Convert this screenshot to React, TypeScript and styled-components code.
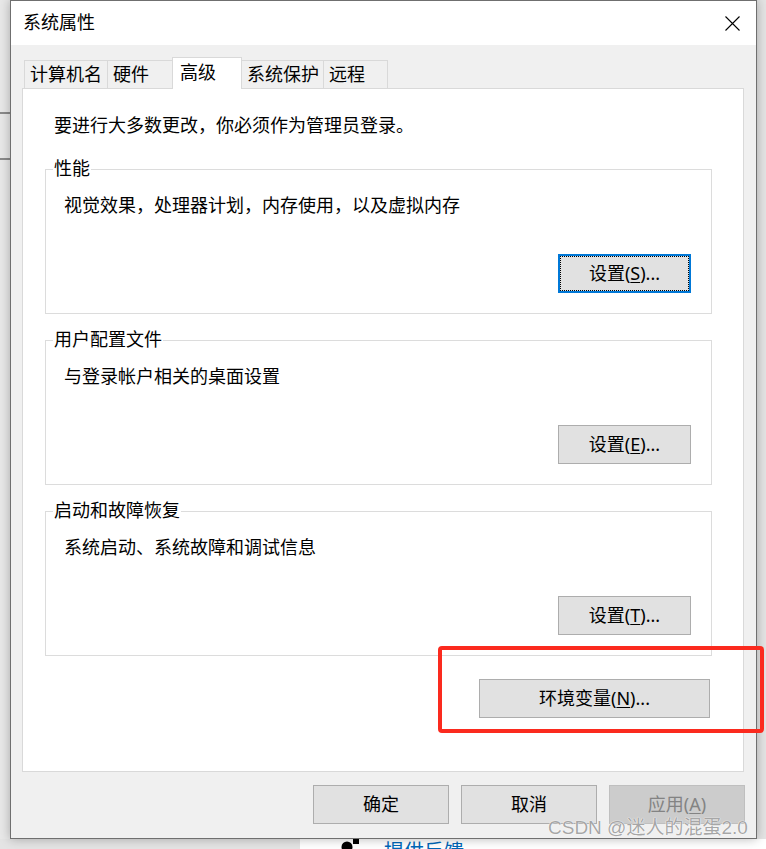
import React from "react";
import styled, { createGlobalStyle } from "styled-components";

const GlobalStyle = createGlobalStyle`
  html, body { margin: 0; padding: 0; background: #e6e6e6; }
  body {
    width: 766px; height: 849px; overflow: hidden;
    font-family: "Noto Sans", "Noto Sans CJK SC", sans-serif;
  }
  * { box-sizing: border-box; }
`;

const UI_FONT = `"Noto Sans", "Noto Sans CJK SC", sans-serif`;

const Desktop = styled.div`
  position: relative;
  width: 766px;
  height: 849px;
  display: grid;
  grid-template-columns: 10px 747px 9px;
  grid-template-rows: 839px 10px;
  background: #e4e4e4;
  overflow: hidden;
`;

const LeftStrip = styled.div`
  grid-column: 1;
  grid-row: 1;
  background: #e8e8e8;
  display: flex;
  flex-direction: column;
`;

const Rule = styled.div<{ $top: number }>`
  height: 2px;
  margin-top: ${(p) => p.$top}px;
  background: #8a8a8a;
`;

const BottomStrip = styled.div`
  grid-column: 1 / -1;
  grid-row: 2;
  display: grid;
  grid-template-columns: 300px 1fr;
  overflow: hidden;
`;

const Sidebar = styled.div`
  background: #e4e4e4;
`;

const MainArea = styled.div`
  background: #ffffff;
  display: flex;
  align-items: flex-start;
  gap: 24px;
  padding: 0 0 0 41px;
`;

const FeedbackLink = styled.span`
  font-family: "Noto Sans CJK SC", sans-serif;
  font-size: 20px;
  line-height: 20px;
  margin-top: 2px;
  color: #0067b8;
`;

const Window = styled.div`
  grid-column: 2;
  grid-row: 1;
  position: relative;
  z-index: 1;
  border: 1px solid #6f6f6f;
  background: #f0f0f0;
  display: flex;
  flex-direction: column;
  box-shadow: 0 0 10px rgba(0, 0, 0, 0.28);
`;

const TitleBar = styled.div`
  height: 44px;
  flex: none;
  background: #ffffff;
  display: flex;
  align-items: center;
  justify-content: space-between;
  padding: 0 16px 0 12px;
`;

const Title = styled.span`
  font-family: ${UI_FONT};
  font-size: 18px;
  line-height: 24px;
  margin-bottom: 3px;
  color: #000;
`;

const Body = styled.div`
  flex: 1;
  display: flex;
  flex-direction: column;
  padding: 12px 12px 14px 11px;
`;

const TabStrip = styled.div`
  height: 31px;
  flex: none;
  display: flex;
  align-items: flex-end;
  padding-left: 2px;
`;

const Tab = styled.div<{ $w: number; $selected?: boolean }>`
  width: ${(p) => p.$w}px;
  height: ${(p) => (p.$selected ? 32 : 28)}px;
  margin-bottom: ${(p) => (p.$selected ? -1 : 0)}px;
  position: relative;
  z-index: ${(p) => (p.$selected ? 2 : 1)};
  background: ${(p) => (p.$selected ? "#ffffff" : "#f0f0f0")};
  border: 1px solid #d9d9d9;
  border-bottom: none;
  display: flex;
  align-items: center;
  padding: ${(p) => (p.$selected ? "0 0 3px 7px" : "0 0 2px 5px")};
  font-family: ${UI_FONT};
  font-size: 18px;
  line-height: 24px;
  color: #000;
  white-space: nowrap;
  & + & {
    margin-left: -1px;
  }
`;

const Panel = styled.div`
  flex: 1;
  background: #ffffff;
  border: 1px solid #d9d9d9;
  display: flex;
  flex-direction: column;
  padding: 24px 31px 0 22px;
`;

const Notice = styled.div`
  margin-left: 9px;
  font-family: ${UI_FONT};
  font-size: 18px;
  line-height: 24px;
  color: #000;
`;

const Group = styled.div`
  height: 145px;
  flex: none;
  border: 1px solid #dcdcdc;
  display: flex;
  flex-direction: column;
  margin-top: 32px;
  & + & {
    margin-top: 26px;
  }
`;

const GroupLabel = styled.span`
  align-self: flex-start;
  margin: -14px 0 0 7px;
  padding: 0 1px;
  background: #ffffff;
  font-family: ${UI_FONT};
  font-size: 18px;
  line-height: 24px;
  color: #000;
`;

const GroupText = styled.div`
  margin: 13px 0 0 18px;
  font-family: ${UI_FONT};
  font-size: 18px;
  line-height: 24px;
  color: #000;
`;

const Button = styled.button<{ $w: number; $focused?: boolean }>`
  width: ${(p) => p.$w}px;
  height: 39px;
  flex: none;
  padding: 0 0 1px;
  background: #e1e1e1;
  border: ${(p) => (p.$focused ? "2px solid #0078d7" : "1px solid #adadad")};
  outline: ${(p) => (p.$focused ? "1px dotted #000" : "none")};
  outline-offset: -3px;
  font-family: ${UI_FONT};
  font-size: 18px;
  line-height: 24px;
  color: #000;
  cursor: default;
  &:disabled {
    background: #cccccc;
    border-color: #bfbfbf;
    color: #838383;
  }
  u {
    text-underline-offset: 2px;
    text-decoration-thickness: 1px;
  }
`;

const GroupButton = styled(Button)`
  margin-top: auto;
  align-self: flex-end;
  margin-right: 20px;
  margin-bottom: 20px;
`;

const EnvButton = styled(Button)`
  align-self: flex-end;
  margin-top: 23px;
  margin-right: 2px;
`;

const Footer = styled.div`
  flex: none;
  display: flex;
  justify-content: flex-end;
  gap: 12px;
  margin-top: 13px;
  margin-right: -1px;
`;

const Highlight = styled.div`
  position: absolute;
  left: 438px;
  top: 646px;
  width: 326px;
  height: 87px;
  border: 4px solid #fb2a1e;
  border-radius: 4px;
  z-index: 5;
  pointer-events: none;
`;

const Watermark = styled.div`
  position: absolute;
  left: 548px;
  top: 816px;
  z-index: 5;
  font-family: "Liberation Sans", "Noto Sans CJK SC", sans-serif;
  font-size: 19px;
  line-height: 24px;
  color: rgba(150, 150, 150, 0.85);
  text-shadow: 0 0 1px #fff, 0 0 1px #fff;
  white-space: nowrap;
  pointer-events: none;
`;

const CloseIcon = () => (
  <svg width="15" height="15" viewBox="0 0 15 15">
    <path d="M0.5 0.5 L14.5 14.5 M14.5 0.5 L0.5 14.5" stroke="#000" strokeWidth="1.1" fill="none" />
  </svg>
);

const FeedbackIcon = () => (
  <svg width="19" height="19" viewBox="0 0 19 19">
    <circle cx="6" cy="8" r="5.5" fill="#000" />
    <rect x="12" y="-2" width="6" height="7" fill="#000" />
  </svg>
);

type Tdef = { label: string; w: number; selected?: boolean };
const tabs: Tdef[] = [
  { label: "计算机名", w: 84 },
  { label: "硬件", w: 66 },
  { label: "高级", w: 70, selected: true },
  { label: "系统保护", w: 83 },
  { label: "远程", w: 65 },
];

type Gdef = { title: string; text: string; key: string; focused?: boolean };
const groups: Gdef[] = [
  { title: "性能", text: "视觉效果，处理器计划，内存使用，以及虚拟内存", key: "S", focused: true },
  { title: "用户配置文件", text: "与登录帐户相关的桌面设置", key: "E" },
  { title: "启动和故障恢复", text: "系统启动、系统故障和调试信息", key: "T" },
];

export default function App() {
  return (
    <>
      <GlobalStyle />
      <Desktop>
        <LeftStrip>
          <Rule $top={112} />
          <Rule $top={44} />
        </LeftStrip>
        <Window>
          <TitleBar>
            <Title>系统属性</Title>
            <CloseIcon />
          </TitleBar>
          <Body>
            <TabStrip>
              {tabs.map((t) => (
                <Tab key={t.label} $w={t.w} $selected={t.selected}>
                  {t.label}
                </Tab>
              ))}
            </TabStrip>
            <Panel>
              <Notice>要进行大多数更改，你必须作为管理员登录。</Notice>
              {groups.map((g) => (
                <Group key={g.title}>
                  <GroupLabel>{g.title}</GroupLabel>
                  <GroupText>{g.text}</GroupText>
                  <GroupButton $w={133} $focused={g.focused}>
                    设置(<u>{g.key}</u>)...
                  </GroupButton>
                </Group>
              ))}
              <EnvButton $w={231}>
                环境变量(<u>N</u>)...
              </EnvButton>
            </Panel>
            <Footer>
              <Button $w={136}>确定</Button>
              <Button $w={136}>取消</Button>
              <Button $w={136} disabled>
                应用(<u>A</u>)
              </Button>
            </Footer>
          </Body>
        </Window>
        <BottomStrip>
          <Sidebar />
          <MainArea>
            <FeedbackIcon />
            <FeedbackLink>提供反馈</FeedbackLink>
          </MainArea>
        </BottomStrip>
        <Highlight />
        <Watermark>CSDN @迷人的混蛋2.0</Watermark>
      </Desktop>
    </>
  );
}
